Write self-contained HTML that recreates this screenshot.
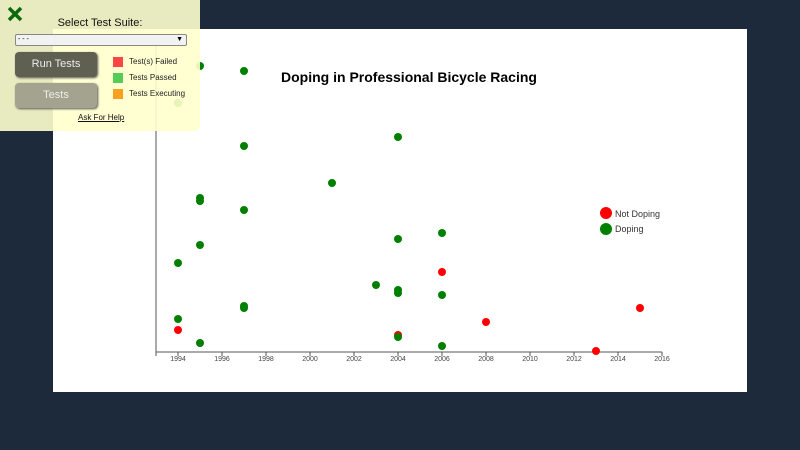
<!DOCTYPE html>
<html><head><style>
body{margin:0;width:800px;height:450px;background:#1c2a3c;position:relative;overflow:hidden;font-family:"Liberation Sans",sans-serif}
#chart{position:absolute;left:53px;top:29px;width:694px;height:363px;background:#fff}
#panel{position:absolute;left:0;top:0;width:200px;height:131px;background:rgba(255,255,205,0.9);border-radius:0 0 6px 0}
.btn{position:absolute;left:15px;width:82px;height:25px;border-radius:4px;color:#eee;font-size:11px;text-align:center;line-height:25px;box-shadow:1px 1px 2px #555}
.lg{position:absolute;left:113px;width:10px;height:10px}
.lt{position:absolute;left:129px;font-size:8px;color:#222}
</style></head><body>
<div id="chart">
<svg width="694" height="363" style="position:absolute;left:0;top:0">
<g transform="translate(-53,-29)">
<text x="409" y="82" font-family="Liberation Sans" font-size="14" font-weight="bold" text-anchor="middle">Doping in Professional Bicycle Racing</text>
<line x1="156" y1="40" x2="156" y2="352" stroke="#555"/>
<line x1="156" y1="352" x2="662" y2="352" stroke="#555"/>
<g stroke="#555">
<line x1="156" y1="352" x2="156" y2="356"/><line x1="178" y1="352" x2="178" y2="356"/><line x1="222" y1="352" x2="222" y2="356"/><line x1="266" y1="352" x2="266" y2="356"/><line x1="310" y1="352" x2="310" y2="356"/><line x1="354" y1="352" x2="354" y2="356"/><line x1="398" y1="352" x2="398" y2="356"/><line x1="442" y1="352" x2="442" y2="356"/><line x1="486" y1="352" x2="486" y2="356"/><line x1="530" y1="352" x2="530" y2="356"/><line x1="574" y1="352" x2="574" y2="356"/><line x1="618" y1="352" x2="618" y2="356"/><line x1="662" y1="352" x2="662" y2="356"/>
</g>
<g font-size="7" fill="#444" text-anchor="middle" font-family="Liberation Sans">
<text x="178" y="361">1994</text><text x="222" y="361">1996</text><text x="266" y="361">1998</text><text x="310" y="361">2000</text><text x="354" y="361">2002</text><text x="398" y="361">2004</text><text x="442" y="361">2006</text><text x="486" y="361">2008</text><text x="530" y="361">2010</text><text x="574" y="361">2012</text><text x="618" y="361">2014</text><text x="662" y="361">2016</text>
</g>
<g fill="#008000">
<circle cx="200" cy="66" r="4"/><circle cx="244" cy="71" r="4"/><circle cx="178" cy="103" r="4"/><circle cx="398" cy="137" r="4"/><circle cx="244" cy="146" r="4"/><circle cx="332" cy="183" r="4"/><circle cx="200" cy="198" r="4"/><circle cx="200" cy="201" r="4"/><circle cx="244" cy="210" r="4"/><circle cx="442" cy="233" r="4"/><circle cx="398" cy="239" r="4"/><circle cx="200" cy="245" r="4"/><circle cx="178" cy="263" r="4"/><circle cx="376" cy="285" r="4"/><circle cx="398" cy="290" r="4"/><circle cx="398" cy="293" r="4"/><circle cx="442" cy="295" r="4"/><circle cx="244" cy="306" r="4"/><circle cx="244" cy="308" r="4"/><circle cx="178" cy="319" r="4"/><circle cx="200" cy="343" r="4"/><circle cx="442" cy="346" r="4"/>
</g>
<g fill="#f00">
<circle cx="442" cy="272" r="4"/><circle cx="640" cy="308" r="4"/><circle cx="486" cy="322" r="4"/><circle cx="178" cy="330" r="4"/><circle cx="398" cy="335" r="4"/><circle cx="596" cy="351" r="4"/>
</g>
<circle cx="398" cy="337" r="4" fill="#008000"/>
<circle cx="606" cy="213" r="6" fill="#f00"/><circle cx="606" cy="229" r="6" fill="#008000"/>
<text x="615" y="217" font-size="9" fill="#333">Not Doping</text>
<text x="615" y="232" font-size="9" fill="#333">Doping</text>
</g></svg>
</div>
<div id="panel">
<svg width="16" height="16" style="position:absolute;left:7px;top:6px"><path d="M2 2L14 14M14 2L2 14" stroke="#0a6a0a" stroke-width="3.5"/></svg>
<div style="position:absolute;left:0;width:200px;top:17px;text-align:center;font-size:11px;color:#111">Select Test Suite:</div>
<div style="position:absolute;left:15px;top:34px;width:168px;height:10px;background:#f2f2f2;border:1px solid #888;border-radius:2px;font-size:7px;line-height:10px;padding-left:2px">- - -<span style="position:absolute;right:3px;font-size:7px">&#9660;</span></div>
<div class="btn" style="top:52px;background:#5f5f52">Run Tests</div>
<div class="btn" style="top:83px;background:#a3a390">Tests</div>
<div class="lg" style="top:57px;background:#f44"></div><div class="lt" style="top:57px">Test(s) Failed</div>
<div class="lg" style="top:73px;background:#5c5"></div><div class="lt" style="top:73px">Tests Passed</div>
<div class="lg" style="top:89px;background:#f9a020"></div><div class="lt" style="top:89px">Tests Executing</div>
<div style="position:absolute;left:78px;top:113px;font-size:8px;text-decoration:underline;color:#111">Ask For Help</div>
</div>
</body></html>
